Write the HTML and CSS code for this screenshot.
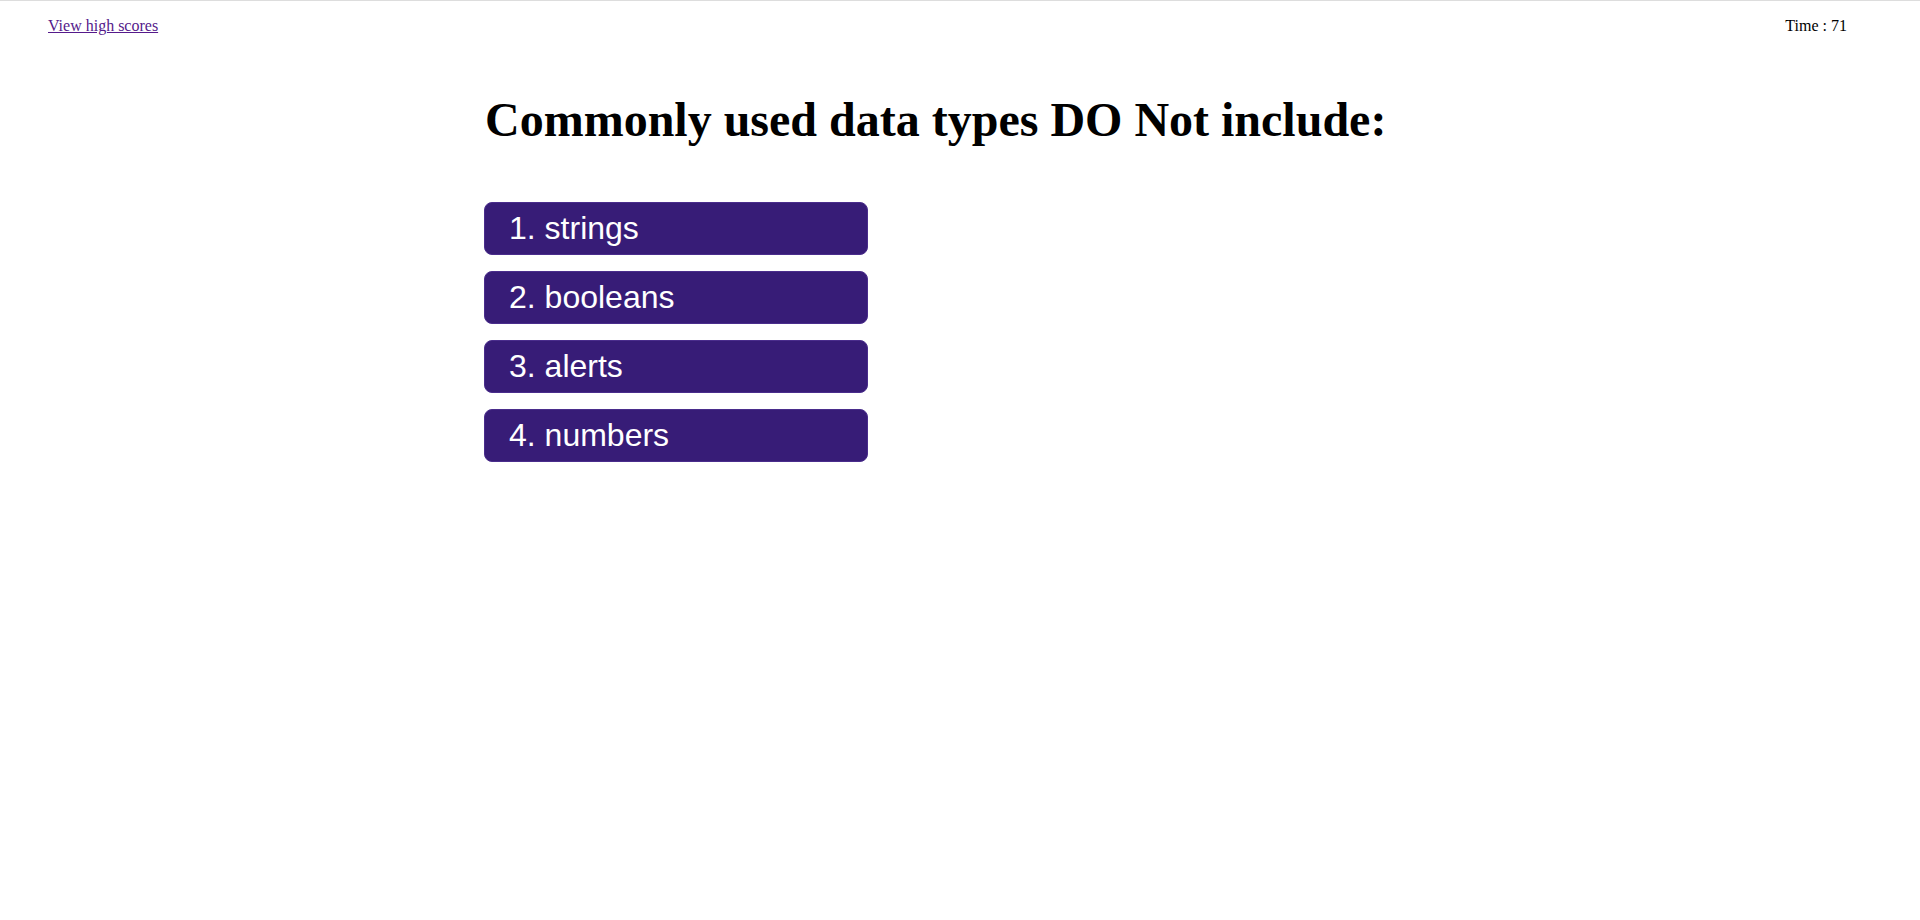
FILE: index.html
```html
<!DOCTYPE html>
<html>
<head>
<meta charset="utf-8">
<link rel="stylesheet" href="styles.css">
</head>
<body>
<header class="topbar">
  <a class="scores-link" href="#">View high scores</a>
  <div class="timer">Time : 71</div>
</header>
<main class="quiz">
  <h1 class="question">Commonly used data types DO Not include:</h1>
  <div class="choices">
    <button class="choice">1. strings</button>
    <button class="choice">2. booleans</button>
    <button class="choice">3. alerts</button>
    <button class="choice">4. numbers</button>
  </div>
</main>
</body>
</html>
```
FILE: styles.css
```css
html, body {
  margin: 0;
  padding: 0;
  background: #fff;
}
body {
  font-family: "Liberation Serif", "Times New Roman", serif;
  font-size: 16px;
  color: #000;
  border-top: 1px solid #dddddd;
}
.topbar {
  display: flex;
  justify-content: space-between;
  align-items: baseline;
  padding: 16px 73px 0 48px;
}
.scores-link {
  color: #551a8b;
}
.quiz {
  padding: 0 0 0 484px;
}
.question {
  font-size: 48px;
  font-weight: bold;
  margin: 57px 0 0 1px;
}
.choices {
  display: flex;
  flex-direction: column;
  gap: 16px;
  margin-top: 55px;
  width: 384px;
}
.choice {
  box-sizing: border-box;
  height: 53px;
  width: 384px;
  background: #371c77;
  color: #fff;
  border: 1px solid #4a2d8c;
  border-radius: 8px;
  font-family: "Liberation Sans", Arial, sans-serif;
  font-size: 32px;
  text-align: left;
  padding: 0 0 0 24px;
}
```
